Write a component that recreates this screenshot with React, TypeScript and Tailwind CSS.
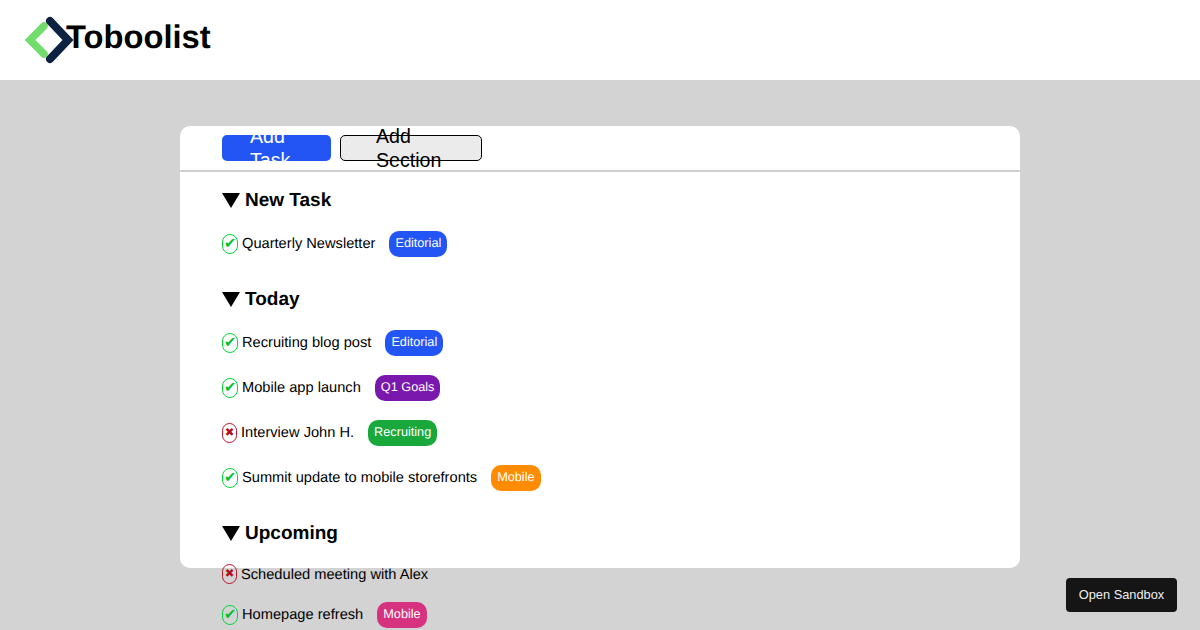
const font = { fontFamily: '"Liberation Sans", Arial, sans-serif' };

type Task = { name: string; done: boolean; tag?: string; color?: string };

const sections: { title: string; tasks: Task[] }[] = [
  { title: "New Task", tasks: [{ name: "Quarterly Newsletter", done: true, tag: "Editorial", color: "bg-[#2355f5]" }] },
  {
    title: "Today",
    tasks: [
      { name: "Recruiting blog post", done: true, tag: "Editorial", color: "bg-[#2355f5]" },
      { name: "Mobile app launch", done: true, tag: "Q1 Goals", color: "bg-[#7a17ad]" },
      { name: "Interview John H.", done: false, tag: "Recruiting", color: "bg-[#19a83c]" },
      { name: "Summit update to mobile storefronts", done: true, tag: "Mobile", color: "bg-[#ff8c00]" },
    ],
  },
  {
    title: "Upcoming",
    tasks: [
      { name: "Scheduled meeting with Alex", done: false },
      { name: "Homepage refresh", done: true, tag: "Mobile", color: "bg-[#d6327f]" },
    ],
  },
];

function Status({ done }: { done: boolean }) {
  return done ? (
    <span className="flex h-[20px] w-[16px] shrink-0 items-center justify-center rounded-full border border-[#00d936] text-[14.500px] leading-none text-[#00c030]" style={{ fontFamily: '"DejaVu Sans", sans-serif' }}>
      ✔
    </span>
  ) : (
    <span className="flex h-[20px] w-[15px] shrink-0 items-center justify-center rounded-full border border-[#b8162a] text-[11.500px] leading-none text-[#b00f1c]" style={{ fontFamily: '"DejaVu Sans", sans-serif' }}>
      ✖
    </span>
  );
}

function Row({ task }: { task: Task }) {
  return (
    <li className={`flex items-center last:mb-0 ${task.tag ? "mb-[19px]" : "mb-[18px]"}`}>
      <Status done={task.done} />
      <span className={`ml-[4px] text-[14.650px] leading-[18px] text-black ${task.tag ? "-mt-[1px]" : "mt-[1px]"}`}>{task.name}</span>
      {task.tag && (
        <span className={`ml-[14px] flex h-[26px] items-center rounded-[10px] px-[6px] text-[12.700px] text-white ${task.color}`}>{task.tag}</span>
      )}
    </li>
  );
}

export default function App() {
  return (
    <div className="h-screen overflow-hidden bg-[#d3d3d3] [text-rendering:geometricPrecision]" style={font}>
      <header className="flex h-[80px] items-center bg-white pl-[24px]">
        <svg width="50" height="50" viewBox="0 0 50 50" className="shrink-0">
          <path d="M20 11 L6 25 L20 39" fill="none" stroke="#72dc6c" strokeWidth="7.500" strokeLinecap="round" strokeLinejoin="miter" />
          <path d="M26 6 L44 25 L26 44" fill="none" stroke="#0b2240" strokeWidth="8" strokeLinecap="round" strokeLinejoin="miter" />
        </svg>
        <h1 className="-ml-[8px] -mt-[6px] text-[32.700px] font-bold leading-none text-black">Toboolist</h1>
      </header>
      <main className="mx-auto mt-[46px] h-[442px] w-[840px] rounded-[10px] bg-white">
        <div className="flex h-[46px] gap-[9px] border-b-2 border-[#cfcfcf] pl-[42px] pt-[9px]">
          <button className="flex h-[26px] w-[109px] items-center rounded-[5px] bg-[#2355f5] pl-[28px] text-left text-[19.600px] leading-[24px] text-white">
            <span className="block w-[50px]">Add Task</span>
          </button>
          <button className="flex h-[26px] w-[142px] items-center rounded-[5px] border border-black bg-[#ebebeb] pl-[35px] text-left text-[19.600px] leading-[24px] text-black">
            <span className="block w-[70px]">Add Section</span>
          </button>
        </div>
        <div className="pl-[42px] pt-[17px]">
          {sections.map((s) => (
            <section key={s.title} className="mb-[31px]">
              <h3 className="mb-[20px] flex h-[22px] items-center text-[19px] font-bold leading-[22px] text-black">
                <svg width="18" height="15" viewBox="0 0 18 15" className="mr-[5px] shrink-0">
                  <polygon points="0,0 18,0 9,15" fill="#000" />
                </svg>
                <span className="mt-[2px]">{s.title}</span>
              </h3>
              <ul>
                {s.tasks.map((t) => (
                  <Row key={t.name} task={t} />
                ))}
              </ul>
            </section>
          ))}
        </div>
      </main>
      <button className="absolute left-[1066px] top-[578px] h-[34px] w-[111px] rounded-[4px] bg-[#151515] text-[12.800px] text-[#f0f0f0]">
        Open Sandbox
      </button>
    </div>
  );
}
